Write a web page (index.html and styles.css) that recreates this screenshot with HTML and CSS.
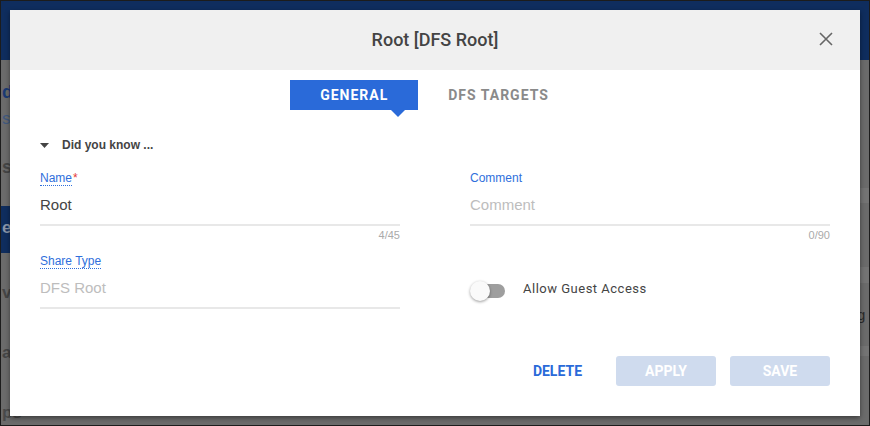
FILE: index.html
```html
<!DOCTYPE html>
<html>
<head>
<meta charset="utf-8">
<link rel="stylesheet" href="styles.css">
</head>
<body>
<div class="screen">
  <div class="bg">
    <div class="bg-top"></div>
    <div class="bg-body">
      <div class="bg-left">
        <div class="frag frag-d">d</div>
        <div class="frag frag-s1">s</div>
        <div class="frag frag-s2">s</div>
        <div class="frag frag-band">e</div>
        <div class="frag frag-vi">vi</div>
        <div class="frag frag-ar">ar</div>
        <div class="frag frag-ps">ps</div>
      </div>
      <div class="bg-right">
        <div class="band band-1"></div>
        <div class="band band-2"></div>
        <div class="frag frag-g">g</div>
        <div class="band band-3"></div>
      </div>
    </div>
  </div>

  <div class="modal">
    <div class="modal-header">
      <div></div>
      <div class="modal-title">Root [DFS Root]</div>
      <button class="close-btn" aria-label="Close">
        <svg width="14" height="14" viewBox="0 0 14 14"><path d="M1 1 L13 13 M13 1 L1 13" stroke="#666" stroke-width="1.6" fill="none"/></svg>
      </button>
    </div>

    <div class="tabs">
      <div class="tab tab-active">GENERAL</div>
      <div class="tab">DFS TARGETS</div>
    </div>

    <div class="modal-body">
      <div class="didyouknow">
        <svg class="caret" width="9" height="5" viewBox="0 0 9 5"><path d="M0 0 H9 L4.5 5 Z" fill="#444"/></svg>
        <span>Did you know ...</span>
      </div>

      <div class="fields">
        <div class="field">
          <div class="label-row"><span class="label dotted">Name</span><span class="req">*</span></div>
          <div class="input value">Root</div>
          <div class="counter">4/45</div>
        </div>
        <div class="field">
          <div class="label-row"><span class="label">Comment</span></div>
          <div class="input placeholder">Comment</div>
          <div class="counter">0/90</div>
        </div>
        <div class="field">
          <div class="label-row"><span class="label dotted">Share Type</span></div>
          <div class="input placeholder">DFS Root</div>
        </div>
        <div class="toggle-cell">
          <div class="toggle"><div class="track"></div><div class="knob"></div></div>
          <span class="toggle-label">Allow Guest Access</span>
        </div>
      </div>

      <div class="actions">
        <button class="btn btn-text">DELETE</button>
        <button class="btn btn-disabled">APPLY</button>
        <button class="btn btn-disabled">SAVE</button>
      </div>
    </div>
  </div>
</div>
</body>
</html>
```

FILE: styles.css
```css
* { box-sizing: border-box; }
html, body { margin: 0; padding: 0; }
body { font-family: "Liberation Sans", Arial, sans-serif; }

.screen {
  position: relative;
  width: 870px;
  height: 426px;
  border: 1px solid #1c1c1c;
  overflow: hidden;
  background: #6b6b6b;
}

/* dimmed background page */
.bg { width: 100%; height: 100%; display: flex; flex-direction: column; }
.bg-top { height: 59px; background: #0f2d5e; flex: none; }
.bg-body { flex: 1; display: flex; justify-content: space-between; }
.bg-left { width: 60px; display: flex; flex-direction: column; }
.bg-right { width: 12px; display: flex; flex-direction: column; }

.frag { font-family: "Liberation Sans", Arial, sans-serif; font-weight: bold; white-space: nowrap; padding-left: 1px; flex: none; }
.frag-d { margin-top: 22px; font-size: 18px; line-height: 20px; color: #1b3a74; }
.frag-s1 { margin-top: 7px; font-size: 17px; line-height: 20px; color: #41597f; font-weight: normal; }
.frag-s2 { margin-top: 27px; font-size: 18px; line-height: 22px; color: #454545; }
.frag-band { margin-top: 28px; height: 47px; background: #0f2d5e; color: #8a95a8; font-size: 17px; line-height: 44px; }
.frag-vi { margin-top: 30px; font-size: 17px; line-height: 20px; color: #454545; }
.frag-ar { margin-top: 40px; font-size: 17px; line-height: 20px; color: #454545; }
.frag-ps { margin-top: 40px; font-size: 17px; line-height: 20px; color: #4a4a4a; }

.band { background: #747474; flex: none; }
.band-1 { margin-top: 128px; height: 15px; }
.band-2 { margin-top: 64px; height: 16px; }
.frag-g { margin-top: 24px; font-weight: normal; font-size: 15px; line-height: 16px; color: #2a2a2a; padding-left: 0; }
.band-3 { margin-top: 23px; height: 10px; }

/* modal */
.modal {
  position: absolute;
  left: 9px;
  top: 9px;
  width: 850px;
  height: 406px;
  background: #fff;
  box-shadow: 0 2px 5px rgba(0,0,0,0.45);
  display: flex;
  flex-direction: column;
}

.modal-header {
  height: 60px;
  background: #f0f0f0;
  display: grid;
  grid-template-columns: 1fr auto 1fr;
  align-items: center;
}
.modal-title {
  font-family: Roboto, "Liberation Sans", sans-serif;
  font-weight: 500;
  font-size: 18px;
  color: #444;
  padding-bottom: 1px;
}
.close-btn {
  justify-self: end;
  margin-right: 27px;
  width: 14px;
  height: 14px;
  padding: 0;
  border: 0;
  background: none;
  display: flex;
  margin-bottom: 2px;
}

.tabs {
  margin-top: 10px;
  display: flex;
  justify-content: center;
  padding-right: 1px;
}
.tab {
  position: relative;
  height: 30px;
  padding: 0 30px;
  font-family: Roboto, "Liberation Sans", sans-serif;
  font-weight: bold;
  font-size: 14px;
  letter-spacing: 1px;
  line-height: 30px;
  color: #8a8a8a;
}
.tab-active { background: #2a6ad9; color: #fff; }
.tab-active::after {
  content: "";
  position: absolute;
  left: 101px;
  top: 30px;
  border-left: 7px solid transparent;
  border-right: 7px solid transparent;
  border-top: 7px solid #2a6ad9;
}

.modal-body { padding: 0 30px; flex: 1; display: flex; flex-direction: column; }

.didyouknow {
  margin-top: 26px;
  height: 18px;
  display: flex;
  align-items: center;
  font-weight: bold;
  font-size: 12px;
  color: #444;
}
.caret { margin-right: 13px; margin-top: 1px; }

.fields {
  margin-top: 18px;
  display: grid;
  grid-template-columns: 360px 360px;
  column-gap: 70px;
  row-gap: 13px;
}
.label-row { height: 14px; line-height: 13px; font-size: 12px; }
.label { color: #2f6fdc; display: inline-block; }
.dotted { border-bottom: 1px dotted #2f6fdc; }
.req { color: #e53935; margin-left: 1px; }
.input {
  height: 40px;
  padding-top: 10px;
  font-size: 15px;
  line-height: 18px;
  border-bottom: 2px solid #e8e8e8;
}
.value { color: #444; }
.placeholder { color: #bdbdbd; }
.counter {
  margin-top: 3px;
  text-align: right;
  font-size: 11px;
  line-height: 13px;
  color: #aaa;
}

.toggle-cell {
  padding-top: 24px;
  display: flex;
  align-items: flex-start;
}
.toggle { position: relative; width: 35px; height: 24px; display: flex; align-items: center; }
.track { margin-left: 2px; width: 33px; height: 14px; border-radius: 7px; background: #9e9e9e; }
.knob {
  position: absolute;
  left: 0;
  top: 2px;
  width: 20px;
  height: 20px;
  border-radius: 50%;
  background: #fafafa;
  box-shadow: 0 1px 3px rgba(0,0,0,0.4);
}
.toggle-label {
  margin-left: 18px;
  font-family: Roboto, "Liberation Sans", sans-serif;
  font-size: 13px;
  letter-spacing: 0.5px;
  line-height: 24px;
  color: #444;
  margin-top: -2px;
}

.actions {
  margin-top: 47px;
  display: flex;
  justify-content: flex-end;
  gap: 14px;
}
.btn {
  height: 30px;
  border: 0;
  border-radius: 3px;
  font-family: Roboto, "Liberation Sans", sans-serif;
  font-weight: bold;
  font-size: 14px;
  padding: 0;
  cursor: pointer;
}
.btn-text { background: none; color: #2a6ad9; padding: 0 20px; }
.btn-disabled { width: 100px; background: #cfdbee; color: #fff; }
```
